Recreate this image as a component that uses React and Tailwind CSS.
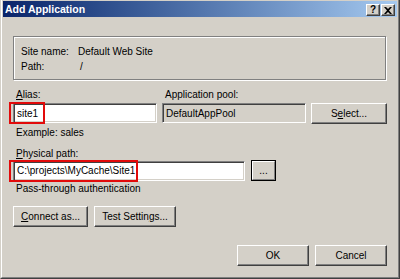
const raised =
  'bg-[#d4d0c8] border border-white border-r-[#404040] border-b-[#404040] shadow-[inset_-1px_-1px_0_#808080]'
const sunken =
  'border border-[#808080] border-r-white border-b-white shadow-[inset_1px_1px_0_#404040,inset_-1px_-1px_0_#d4d0c8]'

function Button({ className = '', children }) {
  return (
    <button className={`${raised} flex items-center justify-center leading-none ${className}`}>
      {children}
    </button>
  )
}

function TitleButton({ children }) {
  return (
    <div className={`${raised} w-[14px] h-[12px] flex items-center justify-center`}>{children}</div>
  )
}

export default function App() {
  return (
    <div className="w-[400px] h-[279px] bg-[#d4d0c8] border-l border-l-[#d4d0c8] border-r border-b border-[#404040] font-['Liberation_Sans',Arial,sans-serif] text-[10px] text-black overflow-hidden">
      <div className="h-full border-l border-l-white border-r border-b border-[#808080] pt-px px-px">
        {/* Title bar */}
        <div className="h-[16px] flex items-start justify-between bg-gradient-to-r from-[#0a246a] to-[#a6caf0] pl-[2px] pr-[2px]">
          <span className="text-white font-bold text-[10.5px] leading-[16px]">Add Application</span>
          <div className="flex gap-px pt-[3px]">
            <TitleButton>
              <span className="font-bold text-[10px] leading-none">?</span>
            </TitleButton>
            <TitleButton>
              <svg width="8" height="7" viewBox="0 0 8 7">
                <path d="M0 0h2l2 2 2-2h2L5 3.5 8 7H6L4 5 2 7H0l3-3.5z" fill="#000" />
              </svg>
            </TitleButton>
          </div>
        </div>

        <div className="px-[10px]">
          {/* Group box */}
          <div className="mt-[19px] w-[373px] h-[44px] border border-[#808080] shadow-[inset_1px_1px_0_#fff,1px_1px_0_#fff] pt-[7px] pl-[7px] leading-[15px]">
            <div className="flex">
              <span className="w-[57px]">Site name:</span>
              <span>Default Web Site</span>
            </div>
            <div className="flex">
              <span className="w-[59px]">Path:</span>
              <span>/</span>
            </div>
          </div>

          {/* Alias / pool */}
          <div className="mt-[8px] grid grid-cols-[144px_144px_76px] gap-x-[5px]">
            <span className="pl-[3px] leading-[13px]">
              <u className="underline-offset-1">A</u>lias:
            </span>
            <span className="pl-[3px] leading-[13px]">Application pool:</span>
            <span />
            <div className="relative mt-[2px]">
              <div className={`${sunken} bg-white h-[20px] flex items-center pl-[3px]`}>site1</div>
              <div className="absolute -left-[4px] -top-[1px] w-[36px] h-[22px] border-2 border-[#e20a0a]" />
            </div>
            <div className={`${sunken} mt-[2px] bg-[#d4d0c8] h-[20px] flex items-center pl-[3px]`}>
              DefaultAppPool
            </div>
            <Button className="mt-[2px] h-[21px]">
              <span>
                S<u className="underline-offset-1">e</u>lect...
              </span>
            </Button>
          </div>

          <div className="mt-[2px] pl-[3px] leading-[13px]">Example: sales</div>

          {/* Physical path */}
          <div className="mt-[8px] pl-[3px] leading-[13px]">
            <u className="underline-offset-1">P</u>hysical path:
          </div>
          <div className="flex items-center gap-[6px] h-[21px]">
            <div className="relative">
              <div className={`${sunken} bg-white w-[232px] h-[20px] flex items-center pl-[3px]`}>
                C:\projects\MyCache\Site1
              </div>
              <div className="absolute -left-[4px] -top-[1px] w-[129px] h-[22px] border-2 border-[#e20a0a]" />
            </div>
            <div className="border border-black h-[21px] w-[25px] flex">
              <div className="flex-1 bg-[#d4d0c8] border border-white border-r-[#808080] border-b-[#808080] flex items-center justify-center">
                ...
              </div>
            </div>
          </div>

          <div className="mt-[1px] pl-[3px] leading-[13px]">Pass-through authentication</div>

          <div className="mt-[11px] flex gap-[6px]">
            <Button className="w-[75px] h-[21px]">
              <span>
                <u className="underline-offset-1">C</u>onnect as...
              </span>
            </Button>
            <Button className="w-[82px] h-[21px]">
              <span>
                Test Settin<u className="underline-offset-1">g</u>s...
              </span>
            </Button>
          </div>

          <div className="mt-[18px] flex justify-end gap-[6px]">
            <Button className="w-[72px] h-[21px]">OK</Button>
            <Button className="w-[72px] h-[21px]">Cancel</Button>
          </div>
        </div>
      </div>
    </div>
  )
}
